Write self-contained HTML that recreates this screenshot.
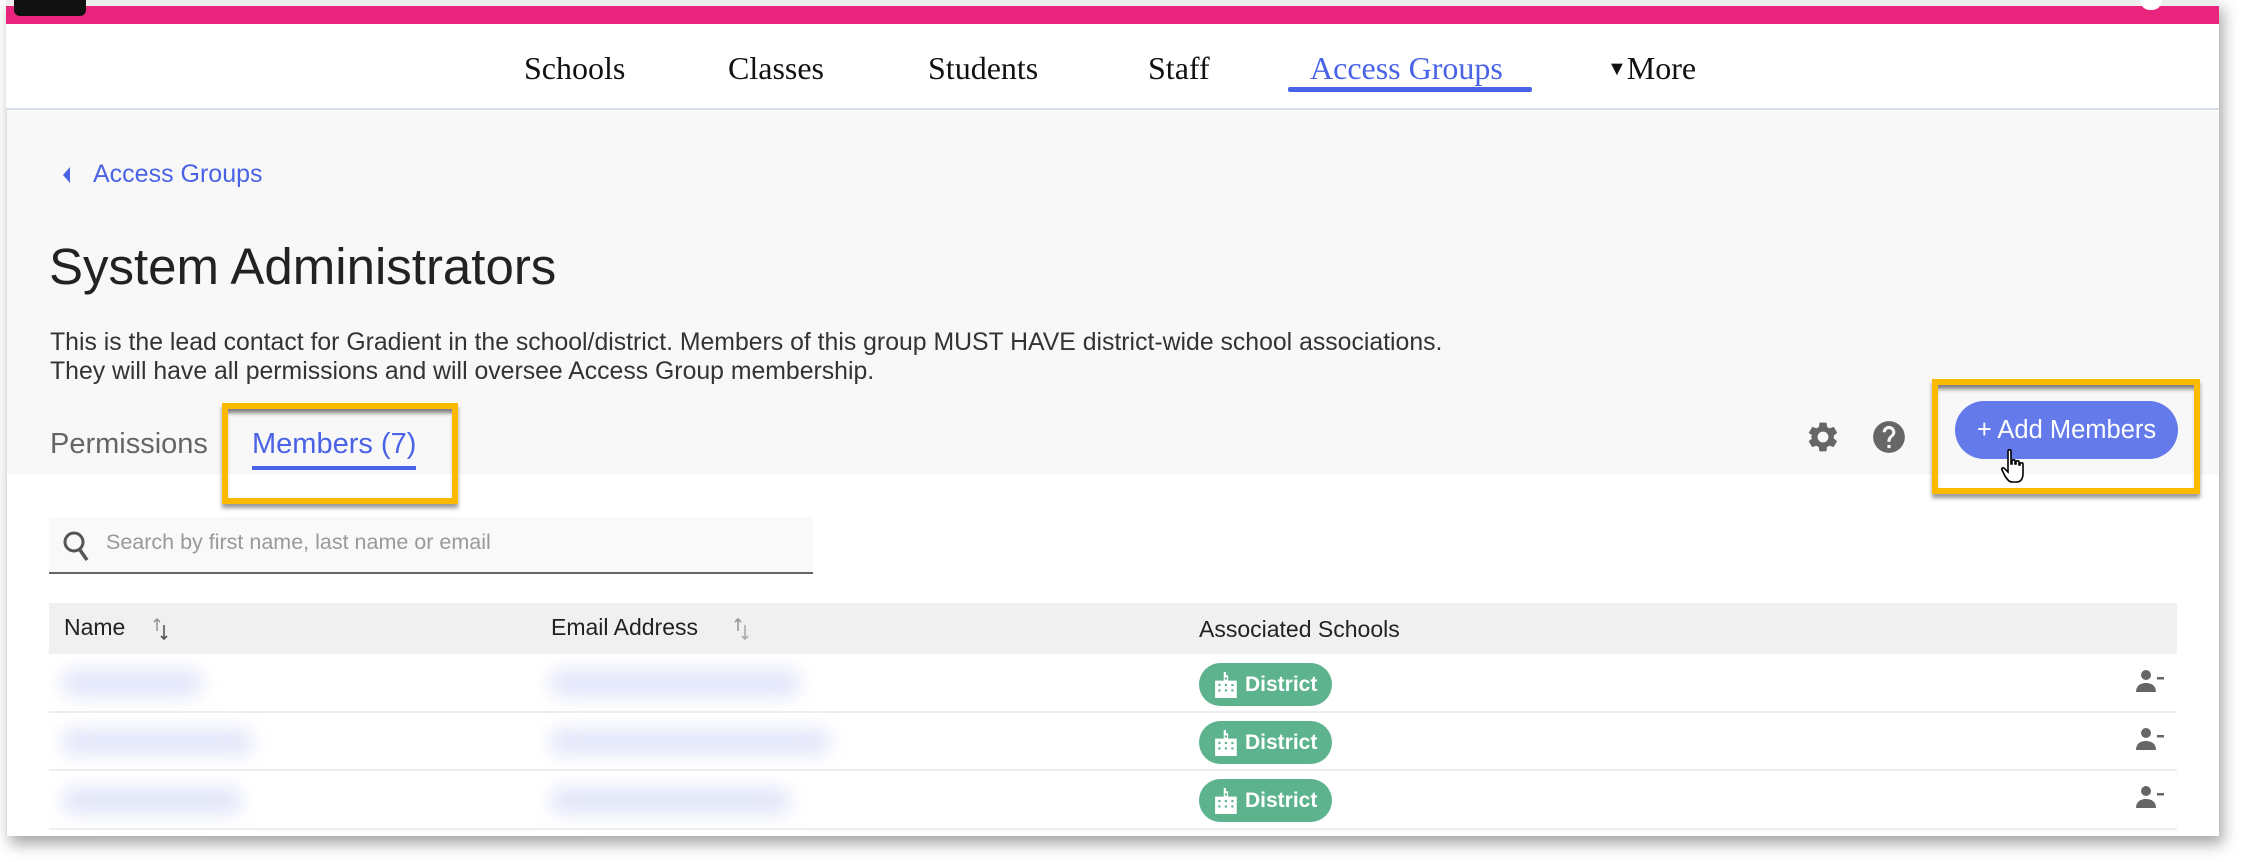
<!DOCTYPE html>
<html><head><meta charset="utf-8"><style>
*{margin:0;padding:0;box-sizing:border-box}
body{width:2244px;height:862px;background:#fff;position:relative;overflow:hidden;font-family:"Liberation Sans",sans-serif}
.abs{position:absolute}
.frame{left:6px;top:0;width:2213px;height:836px;background:#fff;box-shadow:4px 8px 14px rgba(0,0,0,.35);border-left:1px solid #ddd}
.nav a{position:absolute;top:50px;font-family:"Liberation Serif",serif;font-size:32px;color:#111;white-space:nowrap}
.blur{position:absolute;height:26px;background:#c9d0f5;filter:blur(9px);border-radius:12px;opacity:.55}
.pill{position:absolute;left:1199px;width:133px;height:43px;border-radius:22px;background:#5db38e;color:#fff;font-size:21px;font-weight:bold;line-height:43px;padding-left:46px}
.pill svg{position:absolute;left:16px;top:9px}
.row{position:absolute;left:49px;width:2128px;height:2px;background:#eee}
.pm{position:absolute;left:2136px}
.yb{position:absolute;border:6px solid #fbb900;box-shadow:0 4px 4px rgba(0,0,0,.4),inset 0 6px 4px -2px rgba(0,0,0,.5)}
</style></head><body>
<div class="abs frame"></div>
<div class="abs" style="left:6px;top:0;width:2213px;height:6px;background:#eee"></div>
<div class="abs" style="left:6px;top:6px;width:2213px;height:18px;background:#e8247c"></div>
<div class="abs" style="left:14px;top:0;width:72px;height:16px;background:#111;border-radius:0 0 6px 6px"></div>
<div class="abs" style="left:2140px;top:0;width:22px;height:10px;background:#fff;border-radius:0 0 11px 11px"></div>
<div class="abs" style="left:6px;top:24px;width:2213px;height:86px;background:#fff;border-bottom:2px solid #d6dce8"></div>
<div class="nav">
<a style="left:524px">Schools</a>
<a style="left:728px">Classes</a>
<a style="left:928px">Students</a>
<a style="left:1148px">Staff</a>
<a style="left:1310px;color:#4a63e6">Access Groups</a>
<a style="left:1607px"><span style="font-size:20px;position:relative;top:-4px">▼</span>More</a>
</div>
<div class="abs" style="left:1288px;top:87px;width:244px;height:5px;background:#4a63e6;border-radius:2px"></div>
<div class="abs" style="left:7px;top:111px;width:2212px;height:363px;background:#f8f8f8"></div>
<svg class="abs" style="left:62px;top:166px" width="10" height="18"><path d="M8 1 L1 9 L8 17Z" fill="#4a63e6"/></svg>
<div class="abs" style="left:93px;top:160px;font-size:25px;color:#4a63e6">Access Groups</div>
<div class="abs" style="left:49px;top:237px;font-size:51px;color:#222">System Administrators</div>
<div class="abs" style="left:50px;top:328px;font-size:24.8px;color:#333;line-height:29px;width:1600px;white-space:nowrap">This is the lead contact for Gradient in the school/district. Members of this group MUST HAVE district-wide school associations.<br>They will have all permissions and will oversee Access Group membership.</div>
<div class="abs" style="left:50px;top:428px;font-size:29px;color:#666">Permissions</div>
<div class="abs" style="left:252px;top:428px;font-size:29px;color:#4a63e6">Members (7)</div>
<div class="abs" style="left:252px;top:466px;width:164px;height:4px;background:#4a63e6"></div>
<div class="yb" style="left:222px;top:403px;width:236px;height:101px"></div>
<svg class="abs" style="left:1805px;top:419px" width="36" height="36" viewBox="0 0 24 24"><path fill="#666" d="M19.14 12.94c.04-.3.06-.61.06-.94s-.02-.64-.07-.94l2.03-1.58a.49.49 0 0 0 .12-.61l-1.92-3.32a.49.49 0 0 0-.59-.22l-2.39.96c-.5-.38-1.030-.7-1.62-.94l-.36-2.54a.48.48 0 0 0-.48-.41h-3.84c-.24 0-.43.17-.47.41l-.36 2.54c-.59.24-1.13.57-1.62.94l-2.39-.96a.48.48 0 0 0-.59.22L2.74 8.87c-.12.21-.8.47.12.61l2.03 1.58c-.5.3-.8.63-.8.94s.2.64.7.94l-2.03 1.58a.49.49 0 0 0-.12.61l1.92 3.32c.12.22.37.29.59.22l2.39-.96c.5.38 1.03.7 1.62.94l.36 2.54c.5.24.24.41.48.41h3.84c.24 0 .44-.17.47-.41l.36-2.54c.59-.24 1.13-.56 1.62-.94l2.39.96c.22.08.47 0 .59-.22l1.92-3.32a.46.46 0 0 0-.12-.61l-2.01-1.58zM12 15.6A3.6 3.6 0 1 1 12 8.4a3.6 3.6 0 0 1 0 7.2z"/></svg>
<svg class="abs" style="left:1870px;top:418px" width="38" height="38" viewBox="0 0 24 24"><path fill="#666" d="M12 2C6.48 2 2 6.48 2 12s4.48 10 10 10 10-4.48 10-10S17.52 2 12 2zm1 17h-2v-2h2v2zm2.07-7.75l-.9.92C13.45 12.9 13 13.5 13 15h-2v-.5c0-1.1.45-2.1 1.17-2.830l1.24-1.26c.37-.36.59-.86.59-1.41 0-1.1-.9-2-2-2s-2 .9-2 2H8c0-2.21 1.79-4 4-4s4 1.79 4 4c0 .88-.36 1.68-.93 2.25z"/></svg>
<div class="abs" style="left:1955px;top:401px;width:223px;height:58px;border-radius:29px;background:#6479ea;color:#fff;font-size:25.5px;line-height:58px;text-align:center">+ Add Members</div>
<svg class="abs" style="left:2000px;top:448px" width="28" height="36" viewBox="0 0 14 18"><path d="M4 1.5c0-.8 1.5-.8 1.5 0V8h.5V6.5c0-.8 1.5-.8 1.5 0V8h.5V7c0-.8 1.5-.8 1.5 0v1.5h.5V8c0-.8 1.5-.8 1.5 0v5c0 2-1 4-3 4H6c-1.5 0-2.5-1.5-3.5-3L1 11c-.4-.8.6-1.5 1.2-.8L4 12z" fill="#fff" stroke="#000" stroke-width=".8"/></svg>
<div class="yb" style="left:1932px;top:379px;width:268px;height:115px"></div>
<div class="abs" style="left:49px;top:517px;width:764px;height:57px;background:#f9f9f9;border-bottom:2px solid #666"></div>
<svg class="abs" style="left:62px;top:529px" width="30" height="34" viewBox="0 0 30 34"><circle cx="12" cy="13" r="9" fill="none" stroke="#555" stroke-width="3"/><path d="M18 21 L25 31" stroke="#555" stroke-width="3.5"/></svg>
<div class="abs" style="left:106px;top:530px;font-size:21.5px;color:#999">Search by first name, last name or email</div>
<div class="abs" style="left:49px;top:603px;width:2128px;height:51px;background:#f0f0f0"></div>
<div class="abs" style="left:64px;top:614px;font-size:23px;color:#222">Name</div>
<div class="abs" style="left:551px;top:614px;font-size:23px;color:#222">Email Address</div>
<div class="abs" style="left:1199px;top:616px;font-size:23px;color:#222">Associated Schools</div>
<svg class="abs" style="left:152px;top:617px" width="20" height="26"><path d="M5 2v12M2 5l3-3 3 3" stroke="#999" stroke-width="1.6" fill="none"/><path d="M12 8v14M9 19l3 3 3-3" stroke="#555" stroke-width="1.6" fill="none"/></svg>
<svg class="abs" style="left:733px;top:617px" width="20" height="26"><path d="M5 2v12M2 5l3-3 3 3" stroke="#999" stroke-width="1.6" fill="none"/><path d="M12 8v14M9 19l3 3 3-3" stroke="#aaa" stroke-width="1.6" fill="none"/></svg>
<div class="row" style="top:711px"></div><div class="row" style="top:769px"></div><div class="row" style="top:828px"></div>
<div class="blur" style="left:62px;top:670px;width:140px"></div>
<div class="blur" style="left:550px;top:670px;width:250px"></div>
<div class="blur" style="left:62px;top:729px;width:190px"></div>
<div class="blur" style="left:550px;top:729px;width:280px"></div>
<div class="blur" style="left:62px;top:788px;width:180px"></div>
<div class="blur" style="left:550px;top:788px;width:240px"></div>
<div class="pill" style="top:663px"><svg width="24" height="26" viewBox="0 0 22 24"><path d="M8 0h2v3h2v5h8v16H0V8h8z" fill="#fff"/><g fill="#5db38e"><rect x="3" y="11" width="2" height="2"/><rect x="3" y="16" width="2" height="2"/><rect x="9" y="11" width="2" height="2"/><rect x="9" y="16" width="2" height="2"/><rect x="15" y="11" width="2" height="2"/><rect x="15" y="16" width="2" height="2"/><rect x="9" y="5" width="2" height="2"/></g></svg>District</div>
<div class="pill" style="top:721px"><svg width="24" height="26" viewBox="0 0 22 24"><path d="M8 0h2v3h2v5h8v16H0V8h8z" fill="#fff"/><g fill="#5db38e"><rect x="3" y="11" width="2" height="2"/><rect x="3" y="16" width="2" height="2"/><rect x="9" y="11" width="2" height="2"/><rect x="9" y="16" width="2" height="2"/><rect x="15" y="11" width="2" height="2"/><rect x="15" y="16" width="2" height="2"/><rect x="9" y="5" width="2" height="2"/></g></svg>District</div>
<div class="pill" style="top:779px"><svg width="24" height="26" viewBox="0 0 22 24"><path d="M8 0h2v3h2v5h8v16H0V8h8z" fill="#fff"/><g fill="#5db38e"><rect x="3" y="11" width="2" height="2"/><rect x="3" y="16" width="2" height="2"/><rect x="9" y="11" width="2" height="2"/><rect x="9" y="16" width="2" height="2"/><rect x="15" y="11" width="2" height="2"/><rect x="15" y="16" width="2" height="2"/><rect x="9" y="5" width="2" height="2"/></g></svg>District</div>
<svg class="pm" style="top:669px" width="30" height="24" viewBox="0 0 30 24"><circle cx="10" cy="6" r="5" fill="#666"/><path d="M0 23c0-6 4-9 10-9s10 3 10 9z" fill="#666"/><rect x="21" y="8" width="7" height="2.5" fill="#666"/></svg>
<svg class="pm" style="top:727px" width="30" height="24" viewBox="0 0 30 24"><circle cx="10" cy="6" r="5" fill="#666"/><path d="M0 23c0-6 4-9 10-9s10 3 10 9z" fill="#666"/><rect x="21" y="8" width="7" height="2.5" fill="#666"/></svg>
<svg class="pm" style="top:785px" width="30" height="24" viewBox="0 0 30 24"><circle cx="10" cy="6" r="5" fill="#666"/><path d="M0 23c0-6 4-9 10-9s10 3 10 9z" fill="#666"/><rect x="21" y="8" width="7" height="2.5" fill="#666"/></svg>
</body></html>
